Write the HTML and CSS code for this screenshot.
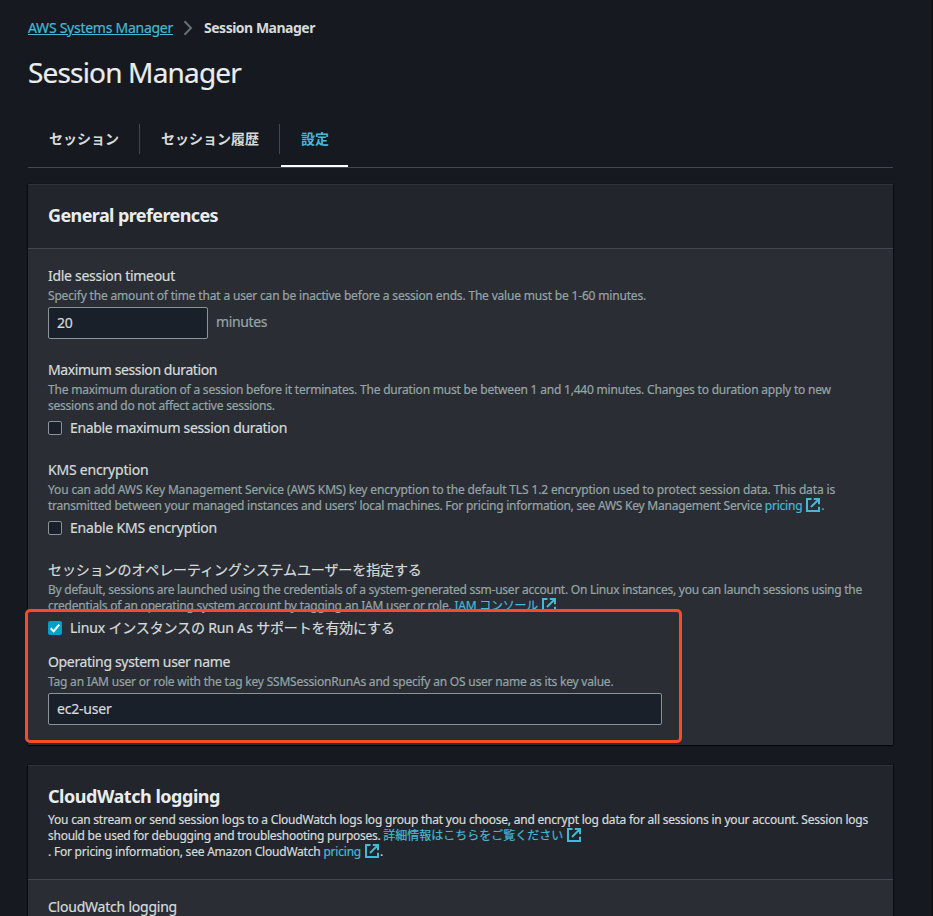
FILE: index.html
```html
<!DOCTYPE html>
<html lang="ja">
<head>
<meta charset="utf-8">
<title>Session Manager</title>
<link rel="stylesheet" href="styles.css">
</head>
<body>
<svg class="defs" width="0" height="0" aria-hidden="true">
  <symbol id="external" viewBox="0 0 16 16">
    <path d="M6.500 2H2v12h12V9.800M8.800 2H14v5.200M6 10l7.500-7.500" fill="none" stroke="currentColor" stroke-width="2"/>
  </symbol>
</svg>
<main class="page">
  <nav class="breadcrumb">
    <a class="crumb" href="#">AWS Systems Manager</a>
    <svg class="chevron" viewBox="0 0 10 16"><path d="M1.500 1.200 8 8l-6.500 6.800" fill="none" stroke="currentColor" stroke-width="2"/></svg>
    <span class="current">Session Manager</span>
  </nav>
  <h1>Session Manager</h1>
  <div class="tabs">
    <div class="tab"><span>セッション</span></div>
    <div class="tab"><span>セッション履歴</span></div>
    <div class="tab active"><span>設定</span></div>
  </div>

  <section class="panel general">
    <header class="panel-head"><h2 class="t-general">General preferences</h2></header>
    <div class="panel-body">
      <div class="field">
        <div class="label t-idle">Idle session timeout</div>
        <div class="desc"><div class="t-d1">Specify the amount of time that a user can be inactive before a session ends. The value must be 1-60 minutes.</div></div>
        <div class="input-row"><div class="input short">20</div><span class="unit">minutes</span></div>
      </div>
      <div class="field">
        <div class="label t-max">Maximum session duration</div>
        <div class="desc">
          <div class="t-d2">The maximum duration of a session before it terminates. The duration must be between 1 and 1,440 minutes. Changes to duration apply to new</div>
          <div class="t-d4">sessions and do not affect active sessions.</div>
        </div>
        <div class="check"><i class="box"></i><span class="t-enable">Enable maximum session duration</span></div>
      </div>
      <div class="field">
        <div class="label t-kms">KMS encryption</div>
        <div class="desc">
          <div class="t-d3">You can add AWS Key Management Service (AWS KMS) key encryption to the default TLS 1.2 encryption used to protect session data. This data is</div>
          <div class="t-d4">transmitted between your managed instances and users' local machines. For pricing information, see AWS Key Management Service <a href="#">pricing <svg class="ext"><use href="#external"/></svg></a>.</div>
        </div>
        <div class="check"><i class="box"></i><span class="t-kms">Enable KMS encryption</span></div>
      </div>
      <div class="field run-as">
        <div class="label jp-label">セッションのオペレーティングシステムユーザーを指定する</div>
        <div class="desc">
          <div class="t-d5">By default, sessions are launched using the credentials of a system-generated ssm-user account. On Linux instances, you can launch sessions using the</div>
          <div class="t-d7">credentials of an operating system account by tagging an IAM user or role. <a href="#">IAM コンソール <svg class="ext"><use href="#external"/></svg></a></div>
        </div>
        <div class="check"><i class="box checked"><svg viewBox="0 0 14 14"><path d="M2.600 7.200 5.700 10.200 11.300 3.600" fill="none" stroke="currentColor" stroke-width="2"/></svg></i><span class="jp">Linux インスタンスの Run As サポートを有効にする</span></div>
      </div>
      <div class="field">
        <div class="label t-os">Operating system user name</div>
        <div class="desc"><div class="t-d2">Tag an IAM user or role with the tag key SSMSessionRunAs and specify an OS user name as its key value.</div></div>
        <div class="input wide">ec2-user</div>
      </div>
    </div>
    <div class="highlight"></div>
  </section>

  <section class="panel">
    <header class="panel-head cw">
      <h2 class="t-cw">CloudWatch logging</h2>
      <div class="desc light">
        <div class="t-d6">You can stream or send session logs to a CloudWatch logs log group that you choose, and encrypt log data for all sessions in your account. Session logs</div>
        <div class="t-d8">should be used for debugging and troubleshooting purposes. <a href="#"><span class="jp-link">詳細情報はこちらをご覧ください</span> <svg class="ext"><use href="#external"/></svg></a></div>
        <div class="t-d6">. For pricing information, see Amazon CloudWatch <a href="#">pricing <svg class="ext"><use href="#external"/></svg></a>.</div>
      </div>
    </header>
    <div class="panel-body">
      <div class="label t-cwl">CloudWatch logging</div>
    </div>
  </section>
</main>
</body>
</html>
```
FILE: styles.css
```css
* { box-sizing: border-box; }
html { background: #16191f; }
body {
  margin: 0;
  height: 916px;
  overflow: hidden;
  background: #16191f;
  color: #d5dbdb;
  font: 14px/22px "Noto Sans", "Noto Sans CJK JP", sans-serif;
  -webkit-text-stroke: 0.2px currentColor;
}
.defs { display: block; width: 0; height: 0; }
.page {
  width: 933px;
  height: 916px;
  padding: 17px 38px 0 28px;
  border-right: 2px solid #0f1116;
  overflow: hidden;
  white-space: nowrap;
}
a { color: #44b9d6; text-decoration: none; }
h1, h2 { margin: 0; color: #eaeded; }

.breadcrumb { display: flex; align-items: center; height: 22px; }
.crumb { width: 145px; letter-spacing: -0.263px; text-decoration: underline; }
.chevron { width: 10px; height: 16px; margin: 0 11px 0 10px; color: #687078; }
.current { font-weight: 700; letter-spacing: -0.49px; -webkit-text-stroke: 0; }
h1 { font-size: 28px; line-height: 36px; font-weight: 400; letter-spacing: -0.829px; margin-top: 15px; }
h2 { font-size: 18px; line-height: 22px; font-weight: 700; -webkit-text-stroke: 0; }

.tabs {
  display: flex;
  height: 58px;
  margin-top: 20px;
  padding-left: 1px;
  border-bottom: 1px solid #414750;
  font-weight: 700;
  -webkit-text-stroke: 0;
}
.tab { position: relative; height: 57px; padding: 18px 20px 0; }
.tab:not(.active)::after { content: ""; position: absolute; right: 0; top: 14px; width: 1px; height: 30px; background: #414750; }
.tab:nth-child(1) { width: 111px; }
.tab:nth-child(2) { width: 140px; padding-left: 21px; }
.tab.active { color: #44b9d6; width: 67px; margin-left: 1px; border-bottom: 2px solid #fff; }

.panel {
  position: relative;
  width: 865px;
  margin-top: 16px;
  background: #2a2d34;
  border-top: 1px solid #2f3239;
  box-shadow: 0 1px 1px rgba(0,0,0,.7), -1px 0 1px rgba(0,0,0,.4), 1px 0 1px rgba(0,0,0,.4);
}
.panel.general { height: 561px; }
.panel + .panel { margin-top: 20px; height: 170px; }
.panel-head { height: 64px; padding: 19px 20px; background: #22262c; border-bottom: 1px solid #414750; }
.panel-head.cw { height: 114px; }
.panel-body { padding: 16px 20px 20px; }
.field { margin-bottom: 20px; }
.field.run-as { margin-bottom: 12px; }
.label { height: 23px; }
.desc { font-size: 12px; line-height: 16px; color: #95a5a6; }
.desc > div { height: 16px; }
.desc.light { color: #d5dbdb; margin-top: 5px; }
.input-row { display: flex; margin-top: 3px; }
.input {
  height: 32px;
  padding: 4px 8px;
  line-height: 22px;
  background: #1a2029;
  border: 1px solid #879596;
  border-radius: 2px;
  letter-spacing: -0.2px;
}
.short { width: 160px; }
.wide { width: 614px; margin-top: 3px; }
.unit { margin: 4px 0 0 8px; color: #95a5a6; letter-spacing: -0.382px; }
.check { display: flex; align-items: center; height: 22px; margin-top: 3px; }
.box { width: 14px; height: 14px; margin-right: 8px; background: #1a2029; border: 1px solid #879596; border-radius: 2px; }
.box.checked { background: #00a1c9; border: 0; color: #fff; }
.box svg { display: block; width: 14px; height: 14px; }
.ext { display: inline-block; width: 16px; height: 16px; margin-top: -2px; vertical-align: -3px; }
.highlight { position: absolute; left: -3px; top: 424px; width: 657px; height: 134px; border: 3px solid #fa4a26; border-radius: 5px; }

.jp { letter-spacing: -0.15px; }
.jp-label { letter-spacing: -0.1px; }
.jp-link { letter-spacing: 0; }
.t-general { letter-spacing: -0.604px; }
.t-cw { letter-spacing: -0.466px; }
.t-cwl { letter-spacing: -0.224px; }
.t-idle { letter-spacing: -0.287px; }
.t-max { letter-spacing: -0.41px; }
.t-enable { letter-spacing: -0.332px; }
.t-kms { letter-spacing: -0.206px; }
.t-os { letter-spacing: -0.337px; }
.t-d1 { letter-spacing: -0.177px; }
.t-d2 { letter-spacing: -0.205px; }
.t-d3 { letter-spacing: -0.15px; }
.t-d4 { letter-spacing: -0.233px; }
.t-d5 { letter-spacing: -0.244px; }
.t-d6 { letter-spacing: -0.213px; }
.t-d7 { letter-spacing: -0.228px; }
.t-d8 { letter-spacing: -0.265px; }
```
